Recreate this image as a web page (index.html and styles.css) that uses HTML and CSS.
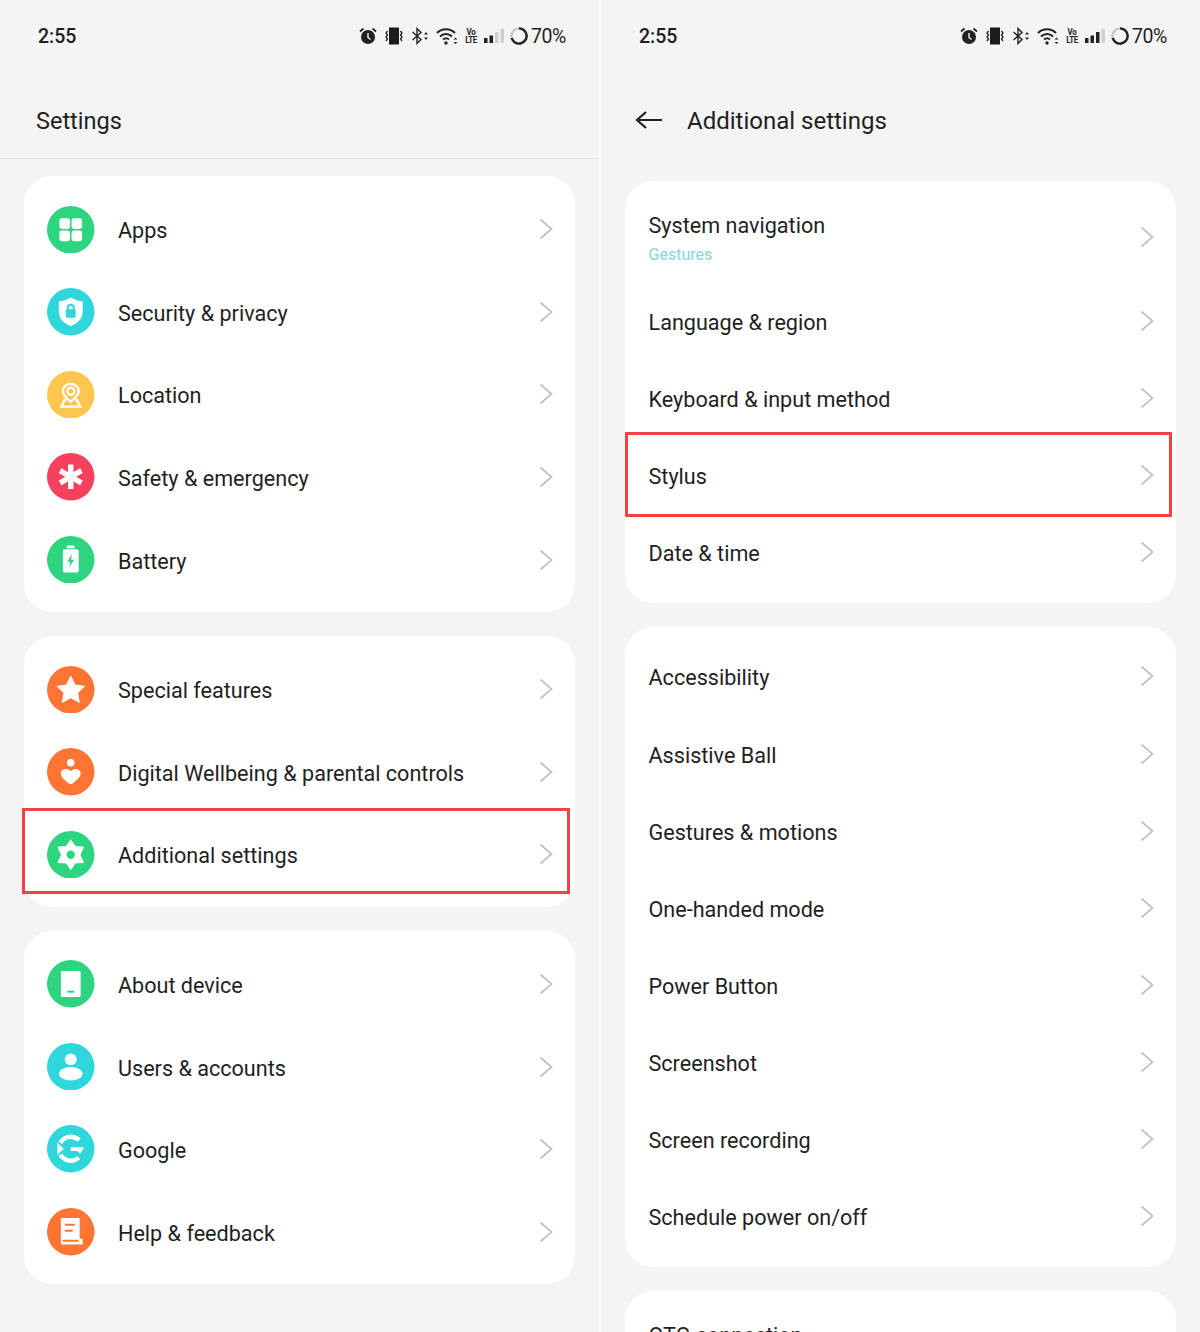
FILE: index.html
```html
<!DOCTYPE html>
<html lang="en">

<head>
    <meta charset="UTF-8" />
    <meta name="viewport" content="width=device-width, initial-scale=1.0" />
    <title>Settings</title>
    <link rel="stylesheet" href="styles.css">
</head>

<body>
    <svg class="defs" width="0" height="0">
        <symbol id="chevron" viewBox="0 0 14 24">
            <path d="M1.5 2.5 L12.5 12 L1.5 21.5" fill="none" stroke="currentColor" stroke-width="1.8" />
        </symbol>
        <symbol id="st-alarm" viewBox="0 0 18 18">
            <circle cx="9" cy="10" r="7" fill="#222" />
            <path d="M1 4.5 L4.5 1.5 M17 4.5 L13.5 1.5" stroke="#222" stroke-width="1.8" />
            <path d="M9 6 V10.5 L11.5 12.5" fill="none" stroke="#f4f4f4" stroke-width="1.4" />
        </symbol>
        <symbol id="st-vibrate" viewBox="0 0 18 18">
            <rect x="4" y="0.5" width="10" height="17" fill="#1c1c1c" />
            <path d="M2.5 4 L1 6 L2.5 8 L1 10 L2.5 12 L1 14 M15.5 4 L17 6 L15.5 8 L17 10 L15.5 12 L17 14" fill="none" stroke="#222" stroke-width="1.3" />
        </symbol>
        <symbol id="st-bt" viewBox="0 0 18 18">
            <path d="M1.5 5 L10 12.5 L6 16.5 V1.5 L10 5.5 L1.5 13" fill="none" stroke="#222" stroke-width="1.4" />
            <path d="M13 7.5 L15 5 L17 7.5 Z M13 10.5 L15 13 L17 10.5 Z" fill="#222" />
        </symbol>
        <symbol id="st-wifi" viewBox="0 0 22 18">
            <path d="M1 6 C6 1 14 1 19 6 M4 9.5 C7.5 6 12.5 6 16 9.5 M7 12.5 C9 10.8 11 10.8 13 12.5" fill="none" stroke="#222" stroke-width="2" />
            <circle cx="10" cy="16" r="1.7" fill="#222" />
            <path d="M17.5 12.5 L19.5 10.5 L21.5 12.5 Z M17.5 15 L19.5 17 L21.5 15 Z" fill="#222" />
        </symbol>
        <symbol id="st-ring" viewBox="0 0 18 18">
            <circle cx="9" cy="9" r="7.6" fill="none" stroke="#c9c9c9" stroke-width="2.4" />
            <path d="M9 1.4 A7.6 7.6 0 1 1 1.7 11" fill="none" stroke="#222" stroke-width="2.4" />
        </symbol>
    </svg>

    <div class="screens">
        <div class="screen">
            <div class="status-bar">
                <span class="clock">2:55</span>
                <div class="status-icons">
                    <svg class="st st-18"><use href="#st-alarm" /></svg>
                    <svg class="st st-18"><use href="#st-vibrate" /></svg>
                    <svg class="st st-18 st-bt"><use href="#st-bt" /></svg>
                    <svg class="st st-22"><use href="#st-wifi" /></svg>
                    <span class="volte">Vo<br>LTE</span>
                    <svg class="st st-signal" viewBox="0 0 21 16">
                        <rect x="0" y="10" width="3.5" height="5" fill="#222" />
                        <rect x="5.5" y="7.5" width="3.5" height="7.5" fill="#222" />
                        <rect x="11" y="4" width="3.5" height="11" fill="#cfcfcf" />
                        <rect x="16.5" y="1" width="3.5" height="14" fill="#cfcfcf" />
                    </svg>
                    <svg class="st st-18 ring"><use href="#st-ring" /></svg>
                    <span class="battery-pct">70%</span>
                </div>
            </div>
            <div class="title-bar title-bar-main">
                <h1>Settings</h1>
            </div>

            <div class="cards cards-main">
                <div class="card">
                    <div class="row row-icon">
                        <svg class="icon" viewBox="0 0 48 48">
                            <circle cx="24" cy="24" r="24" fill="#2fd480" />
                            <rect x="12.5" y="12.5" width="10.7" height="10.7" rx="2.5" fill="#fff" />
                            <rect x="24.8" y="12.5" width="10.7" height="10.7" rx="2.5" fill="#fff" />
                            <rect x="12.5" y="24.8" width="10.7" height="10.7" rx="2.5" fill="#fff" />
                            <rect x="24.8" y="24.8" width="10.7" height="10.7" rx="2.5" fill="#fff" />
                        </svg>
                        <span class="label">Apps</span>
                        <svg class="chevron"><use href="#chevron" /></svg>
                    </div>
                    <div class="row row-icon">
                        <svg class="icon" viewBox="0 0 48 48">
                            <circle cx="24" cy="24" r="24" fill="#2fd6dc" />
                            <path d="M24 9.5 C28 12 32 13 36 13.5 V24 C36 31 31 36 24 38.5 C17 36 12 31 12 24 V13.5 C16 13 20 12 24 9.5 Z" fill="#fff" />
                            <rect x="19" y="21.5" width="10" height="8.5" rx="1.5" fill="#2fd6dc" />
                            <path d="M21 22 V20 C21 16 27 16 27 20 V22" fill="none" stroke="#2fd6dc" stroke-width="2" />
                        </svg>
                        <span class="label">Security &amp; privacy</span>
                        <svg class="chevron"><use href="#chevron" /></svg>
                    </div>
                    <div class="row row-icon">
                        <svg class="icon" viewBox="0 0 48 48">
                            <circle cx="24" cy="24" r="24" fill="#ffc64f" />
                            <path d="M24 31 C20 27.5 16 25 16 20.5 C16 16 20 13 24 13 C28 13 32 16 32 20.5 C32 25 28 27.5 24 31 Z" fill="none" stroke="#fff" stroke-width="2.4" />
                            <circle cx="24" cy="20.5" r="3.6" fill="none" stroke="#fff" stroke-width="2.2" />
                            <path d="M19.5 29.5 H17.5 L14.5 36 H33.5 L30.5 29.5 H28.5" fill="none" stroke="#fff" stroke-width="2.4" />
                        </svg>
                        <span class="label">Location</span>
                        <svg class="chevron"><use href="#chevron" /></svg>
                    </div>
                    <div class="row row-icon">
                        <svg class="icon" viewBox="0 0 48 48">
                            <circle cx="24" cy="24" r="24" fill="#f5405e" />
                            <path d="M24 11.5 V36.5 M13.2 17.8 L34.8 30.2 M34.8 17.8 L13.2 30.2" stroke="#fff" stroke-width="5.4" />
                        </svg>
                        <span class="label">Safety &amp; emergency</span>
                        <svg class="chevron"><use href="#chevron" /></svg>
                    </div>
                    <div class="row row-icon">
                        <svg class="icon" viewBox="0 0 48 48">
                            <circle cx="24" cy="24" r="24" fill="#2fd480" />
                            <rect x="20" y="9.5" width="8" height="3" rx="1" fill="#fff" />
                            <rect x="16" y="13.5" width="16" height="23.5" rx="2" fill="#fff" />
                            <path d="M25 18.5 L20.5 26 H23.5 L22.5 31.5 L27.5 24 H24.5 Z" fill="#2fd480" />
                        </svg>
                        <span class="label">Battery</span>
                        <svg class="chevron"><use href="#chevron" /></svg>
                    </div>
                </div>

                <div class="card">
                    <div class="row row-icon">
                        <svg class="icon" viewBox="0 0 48 48">
                            <circle cx="24" cy="24" r="24" fill="#ff7433" />
                            <path d="M24 10.5 L28.2 19.3 L37.5 20.5 L30.7 27 L32.5 36.5 L24 31.8 L15.5 36.5 L17.3 27 L10.5 20.5 L19.8 19.3 Z" fill="#fff" stroke="#fff" stroke-width="1.2" stroke-linejoin="round" />
                        </svg>
                        <span class="label">Special features</span>
                        <svg class="chevron"><use href="#chevron" /></svg>
                    </div>
                    <div class="row row-icon">
                        <svg class="icon" viewBox="0 0 48 48">
                            <circle cx="24" cy="24" r="24" fill="#ff7433" />
                            <circle cx="24" cy="15" r="3.8" fill="#fff" />
                            <path d="M24 37 C18 33 14 29.5 14 25.5 C14 21.5 20 19.5 24 23.5 C28 19.5 34 21.5 34 25.5 C34 29.5 30 33 24 37 Z" fill="#fff" />
                        </svg>
                        <span class="label">Digital Wellbeing &amp; parental controls</span>
                        <svg class="chevron"><use href="#chevron" /></svg>
                    </div>
                    <div class="row row-icon">
                        <svg class="icon" viewBox="0 0 48 48">
                            <circle cx="24" cy="24" r="24" fill="#2fd480" />
                            <path d="M24 9.5 L28.5 16 L36.5 16.5 L33 24 L36.5 31.5 L28.5 32 L24 38.5 L19.5 32 L11.5 31.5 L15 24 L11.5 16.5 L19.5 16 Z" fill="#fff" stroke="#fff" stroke-width="1.5" stroke-linejoin="round" />
                            <circle cx="24" cy="24" r="4.2" fill="#2fd480" />
                        </svg>
                        <span class="label">Additional settings</span>
                        <svg class="chevron"><use href="#chevron" /></svg>
                        <div class="highlight highlight-main"></div>
                    </div>
                </div>

                <div class="card">
                    <div class="row row-icon">
                        <svg class="icon" viewBox="0 0 48 48">
                            <circle cx="24" cy="24" r="24" fill="#2fd480" />
                            <rect x="14" y="11" width="20" height="26.5" rx="1.5" fill="#fff" />
                            <rect x="20.5" y="31" width="7" height="2" fill="#2fd480" />
                        </svg>
                        <span class="label">About device</span>
                        <svg class="chevron"><use href="#chevron" /></svg>
                    </div>
                    <div class="row row-icon">
                        <svg class="icon" viewBox="0 0 48 48">
                            <circle cx="24" cy="24" r="24" fill="#2fd6dc" />
                            <circle cx="24" cy="16.5" r="6" fill="#fff" />
                            <ellipse cx="24" cy="31" rx="12" ry="6.8" fill="#fff" />
                        </svg>
                        <span class="label">Users &amp; accounts</span>
                        <svg class="chevron"><use href="#chevron" /></svg>
                    </div>
                    <div class="row row-icon">
                        <svg class="icon" viewBox="0 0 48 48">
                            <circle cx="24" cy="24" r="24" fill="#2fd6dc" />
                            <path d="M32.5 15.5 A12 12 0 0 0 13.5 18 M13.5 30 A12 12 0 0 0 32 33" fill="none" stroke="#fff" stroke-width="4.4" />
                            <path d="M10.5 18 L17 24 L10.5 30 Z" fill="#fff" />
                            <path d="M24 22.5 H37.5 L33.5 29 L30.5 26.3 H24 Z" fill="#fff" />
                        </svg>
                        <span class="label">Google</span>
                        <svg class="chevron"><use href="#chevron" /></svg>
                    </div>
                    <div class="row row-icon">
                        <svg class="icon" viewBox="0 0 48 48">
                            <circle cx="24" cy="24" r="24" fill="#ff7433" />
                            <path d="M15 10 H33 V31 H36 V37 H16 C14.5 37 14 36 14 35 V11 C14 10.5 14.5 10 15 10 Z" fill="#fff" />
                            <path d="M18 17 H28 M18 23 H26 M16 33 H32" stroke="#ff7433" stroke-width="2" />
                        </svg>
                        <span class="label">Help &amp; feedback</span>
                        <svg class="chevron"><use href="#chevron" /></svg>
                    </div>
                </div>
            </div>
        </div>

        <div class="screen">
            <div class="status-bar">
                <span class="clock">2:55</span>
                <div class="status-icons">
                    <svg class="st st-18"><use href="#st-alarm" /></svg>
                    <svg class="st st-18"><use href="#st-vibrate" /></svg>
                    <svg class="st st-18 st-bt"><use href="#st-bt" /></svg>
                    <svg class="st st-22"><use href="#st-wifi" /></svg>
                    <span class="volte">Vo<br>LTE</span>
                    <svg class="st st-signal" viewBox="0 0 21 16">
                        <rect x="0" y="10" width="3.5" height="5" fill="#222" />
                        <rect x="5.5" y="7.5" width="3.5" height="7.5" fill="#222" />
                        <rect x="11" y="4" width="3.5" height="11" fill="#222" />
                        <rect x="16.5" y="1" width="3.5" height="14" fill="#cfcfcf" />
                    </svg>
                    <svg class="st st-18 ring"><use href="#st-ring" /></svg>
                    <span class="battery-pct">70%</span>
                </div>
            </div>
            <div class="title-bar">
                <svg class="back" viewBox="0 0 28 20">
                    <path d="M11 2 L2 10 L11 18 M2 10 H27" fill="none" stroke="#222" stroke-width="2.2" />
                </svg>
                <h1>Additional settings</h1>
            </div>

            <div class="cards cards-sub">
                <div class="card">
                    <div class="row row-text row-tall">
                        <div class="label-stack">
                            <span class="label">System navigation</span>
                            <span class="sub-label">Gestures</span>
                        </div>
                        <svg class="chevron"><use href="#chevron" /></svg>
                    </div>
                    <div class="row row-text"><span class="label">Language &amp; region</span><svg class="chevron"><use href="#chevron" /></svg></div>
                    <div class="row row-text"><span class="label">Keyboard &amp; input method</span><svg class="chevron"><use href="#chevron" /></svg></div>
                    <div class="row row-text">
                        <span class="label">Stylus</span>
                        <svg class="chevron"><use href="#chevron" /></svg>
                        <div class="highlight highlight-sub"></div>
                    </div>
                    <div class="row row-text"><span class="label">Date &amp; time</span><svg class="chevron"><use href="#chevron" /></svg></div>
                </div>

                <div class="card">
                    <div class="row row-text"><span class="label">Accessibility</span><svg class="chevron"><use href="#chevron" /></svg></div>
                    <div class="row row-text"><span class="label">Assistive Ball</span><svg class="chevron"><use href="#chevron" /></svg></div>
                    <div class="row row-text"><span class="label">Gestures &amp; motions</span><svg class="chevron"><use href="#chevron" /></svg></div>
                    <div class="row row-text"><span class="label">One-handed mode</span><svg class="chevron"><use href="#chevron" /></svg></div>
                    <div class="row row-text"><span class="label">Power Button</span><svg class="chevron"><use href="#chevron" /></svg></div>
                    <div class="row row-text"><span class="label">Screenshot</span><svg class="chevron"><use href="#chevron" /></svg></div>
                    <div class="row row-text"><span class="label">Screen recording</span><svg class="chevron"><use href="#chevron" /></svg></div>
                    <div class="row row-text"><span class="label">Schedule power on/off</span><svg class="chevron"><use href="#chevron" /></svg></div>
                </div>

                <div class="card">
                    <div class="row row-text row-tall">
                        <div class="label-stack">
                            <span class="label">OTG connection</span>
                            <span class="sub-label"></span>
                        </div>
                        <svg class="chevron"><use href="#chevron" /></svg>
                    </div>
                </div>
            </div>
        </div>
    </div>
</body>

</html>
```

FILE: styles.css
```css
* {
    box-sizing: border-box;
}

html,
body {
    margin: 0;
    height: 1332px;
    overflow: hidden;
}

body {
    font-family: Roboto, "Liberation Sans", sans-serif;
    background-color: #fff;
    color: #1f1f1f;
}

.defs {
    position: absolute;
}

.screens {
    display: flex;
    justify-content: space-between;
    height: 1332px;
}

.screen {
    width: 599px;
    height: 1332px;
    background-color: #f4f4f4;
    overflow: hidden;
}

/* Status bar */
.status-bar {
    display: flex;
    align-items: center;
    justify-content: space-between;
    height: 70px;
    padding: 2px 33px 0 38px;
}

.clock {
    font-size: 19.5px;
    font-weight: 500;
}

.status-icons {
    display: flex;
    align-items: center;
}

.st {
    display: block;
    flex: none;
}

.st-18 {
    width: 18px;
    height: 18px;
    margin-right: 8px;
}

.st-bt {
    margin-right: 7px;
}

.st-22 {
    width: 22px;
    height: 18px;
    margin-right: 7px;
}

.st-signal {
    width: 21px;
    height: 16px;
    margin-right: 5px;
}

.ring {
    margin-right: 3px;
}

.volte {
    width: 12px;
    margin-right: 7px;
    font-size: 8px;
    font-weight: 700;
    line-height: 6.5px;
    letter-spacing: -0.4px;
    text-align: center;
    transform: scaleY(1.2);
}

.battery-pct {
    font-size: 19.5px;
    letter-spacing: -0.4px;
}

/* Title */
.title-bar {
    display: flex;
    align-items: center;
    height: 89px;
    padding: 10px 34px 0;
}

.title-bar-main {
    padding-left: 36px;
    border-bottom: 1px solid #e2e2e2;
}

.title-bar h1 {
    margin: 0;
    font-size: 24px;
    font-weight: 400;
    position: relative;
    top: 1px;
}

.title-bar-main h1 {
    font-size: 23.5px;
    top: 2px;
}

.back {
    width: 28px;
    height: 20px;
    margin-right: 24px;
}

/* Cards */
.cards {
    display: flex;
    flex-direction: column;
    gap: 24px;
    padding-left: 24px;
}

.cards-main {
    padding-top: 17px;
}

.cards-sub {
    padding-top: 22px;
}

.card {
    width: 551px;
    flex: none;
    padding: 12px 0 11px;
    background: #fff;
    border-radius: 28px;
}

.cards-sub .card {
    padding-bottom: 11.5px;
}

.row {
    position: relative;
    display: flex;
    align-items: center;
    padding: 0 22px 0 23px;
}

.row-icon {
    height: 82.6px;
}

.row-text {
    height: 77.1px;
    padding-left: 23.5px;
}

.row-tall {
    height: 90px;
}

.icon {
    width: 47.5px;
    height: 47.5px;
    flex: none;
    margin-right: 23.5px;
}

.label {
    font-size: 21.6px;
    line-height: 28px;
    position: relative;
    top: 1px;
}

.row-icon .label {
    top: 2px;
}

.label-stack {
    display: flex;
    flex-direction: column;
}

.sub-label {
    min-height: 22px;
    margin-top: 5px;
    font-size: 16px;
    line-height: 22px;
    color: #7fd8d8;
}

.chevron {
    width: 14px;
    height: 24px;
    margin-left: auto;
    color: #c2c2c2;
    position: relative;
    top: -1px;
}

.row-icon .chevron {
    top: 0;
}

/* Red annotation boxes */
.highlight {
    position: absolute;
    border: 3px solid #ef4444;
    pointer-events: none;
}

.highlight-main {
    top: -5px;
    bottom: 2px;
    left: -2px;
    right: 5px;
}

.highlight-sub {
    top: -5px;
    bottom: -3px;
    left: 0;
    right: 4px;
}
```
